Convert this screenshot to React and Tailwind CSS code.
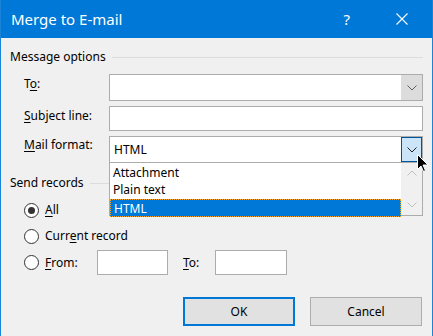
import React from "react";

const Chevron = ({ up = false, color = "#606060" }) => (
  <svg width="10" height="6" viewBox="0 0 10 6" className="block">
    <path
      d={up ? "M0.5 5.5 L5 1 L9.5 5.5" : "M0.5 0.5 L5 5 L9.5 0.5"}
      fill="none"
      stroke={color}
      strokeWidth="1"
    />
  </svg>
);

const Radio = ({ checked }) => (
  <span className="w-[15px] h-[15px] rounded-full border border-[#333] bg-white flex items-center justify-center shrink-0">
    {checked && <span className="w-[7px] h-[7px] rounded-full bg-[#333]" />}
  </span>
);

const Key = ({ children }) => <u className="underline-offset-2">{children}</u>;

const App = () => {
  return (
    <div className="w-[433px] h-[336px] bg-[#f0f0f0] border-x border-[#1883d7] flex flex-col overflow-hidden font-['Noto_Sans',sans-serif] text-[12px] leading-[18px] text-black">
      {/* Title bar */}
      <div className="h-[38px] shrink-0 bg-[#0078d7] flex items-center text-white">
        <span className="pl-[10px] text-[15px]">Merge to E-mail</span>
        <span className="ml-auto text-[15px] mr-[46px]">?</span>
        <svg width="12" height="12" viewBox="0 0 12 12" className="mr-[24px]">
          <path d="M0.5 0.5 L11.5 11.5 M11.5 0.5 L0.5 11.5" stroke="white" strokeWidth="1.1" />
        </svg>
      </div>

      <div className="px-[9px] flex flex-col">
        {/* Message options */}
        <div className="mt-[10px] h-[18px] flex items-center">
          <span>Message options</span>
          <span className="flex-1 h-px bg-[#dcdcdc] ml-[6px]" />
        </div>

        {/* To */}
        <div className="mt-[8px] flex">
          <span className="w-[99px] pl-[14px] pt-[1px]">
            T<Key>o</Key>:
          </span>
          <div className="flex-1 h-[27px] border border-[#acacac] bg-white flex justify-end">
            <div className="w-[21px] h-full bg-[#dcdcdc] flex items-center justify-center">
              <Chevron />
            </div>
          </div>
        </div>

        {/* Subject */}
        <div className="mt-[5px] flex">
          <span className="w-[99px] pl-[14px] pt-[1px]">
            <Key>S</Key>ubject line:
          </span>
          <div className="flex-1 h-[25px] border border-[#acacac] bg-white" />
        </div>

        {/* Mail format */}
        <div className="mt-[5px] flex">
          <span className="w-[99px] pl-[14px]">
            <Key>M</Key>ail format:
          </span>
          <div className="flex-1 h-[27px] border border-[#acacac] bg-white flex items-center relative">
            <span className="pl-[4px]">HTML</span>
            <div className="ml-auto w-[21px] h-full bg-[#cce4f7] border border-[#005499] flex items-center justify-center">
              <Chevron color="#202020" />
            </div>
            {/* open list */}
            <div className="absolute left-[-1px] right-[-1px] top-[25px] h-[54px] border border-[#acacac] bg-white flex z-10">
              <div className="flex-1 flex flex-col pt-[1px] leading-[17px]">
                <span className="pl-[3px]">Attachment</span>
                <span className="pl-[3px]">Plain text</span>
                <span className="pl-[3px] mt-[1px] h-[18px] bg-[#0078d7] text-white border border-dotted border-[#f5a623]">
                  HTML
                </span>
              </div>
              <div className="w-[21px] bg-[#f0f0f0] flex flex-col items-center justify-between py-[7px]">
                <Chevron up color="#c2c2c2" />
                <Chevron color="#c2c2c2" />
              </div>
            </div>
            {/* cursor */}
            <svg
              width="12"
              height="19"
              viewBox="0 0 12 19"
              className="absolute left-[307px] top-[17px] z-20"
            >
              <path
                d="M0.5 0.5 L0.5 15.5 L4 12 L6.5 17.5 L8.5 16.5 L6 11 L11 11 Z"
                fill="black"
                stroke="white"
                strokeWidth="1"
              />
            </svg>
          </div>
        </div>

        {/* Send records */}
        <div className="mt-[11px] h-[18px] flex items-center">
          <span>Send records</span>
          <span className="flex-1 h-px bg-[#dcdcdc] ml-[6px]" />
        </div>

        <div className="mt-[9px] h-[18px] flex items-center pl-[14px] gap-[6px]">
          <Radio checked />
          <span>
            <Key>A</Key>ll
          </span>
        </div>
        <div className="mt-[8px] h-[18px] flex items-center pl-[14px] gap-[6px]">
          <Radio />
          <span>
            Curr<Key>e</Key>nt record
          </span>
        </div>
        <div className="mt-[5px] h-[25px] flex items-center pl-[14px]">
          <Radio />
          <span className="ml-[6px] w-[52px]">
            <Key>F</Key>rom:
          </span>
          <div className="w-[71px] h-[25px] border border-[#acacac] bg-white" />
          <span className="ml-[15px] w-[32px]">
            <Key>T</Key>o:
          </span>
          <div className="w-[72px] h-[25px] border border-[#acacac] bg-white" />
        </div>

        {/* Buttons */}
        <div className="mt-[22px] flex justify-end gap-[15px] pr-[1px]">
          <button className="w-[112px] h-[29px] bg-[#e1e1e1] border-2 border-[#0078d7]">OK</button>
          <button className="w-[112px] h-[29px] bg-[#e1e1e1] border border-[#adadad]">Cancel</button>
        </div>
      </div>
    </div>
  );
};

export default App;
